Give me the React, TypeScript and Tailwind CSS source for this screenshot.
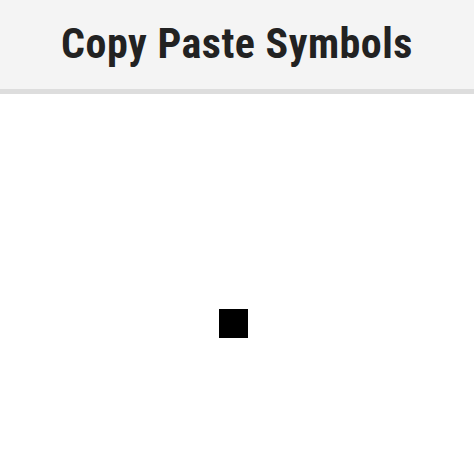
export default function App() {
  return (
    <div className="w-[474px] h-[474px] bg-white flex flex-col">
      <header className="h-[94px] bg-[#f4f4f4] border-b-[5px] border-[#dddddd] flex items-center justify-center">
        <h1
          className="text-[42px] font-bold text-[#222222] leading-none -mt-[2px] tracking-[0.5px]"
          style={{ fontFamily: '"Roboto Condensed", Roboto, sans-serif' }}
        >
          Copy Paste Symbols
        </h1>
      </header>
      <main className="flex-1 flex items-start justify-center pt-[215px]">
        <div className="w-[29px] h-[29px] bg-black ml-[-8px]" />
      </main>
    </div>
  );
}
